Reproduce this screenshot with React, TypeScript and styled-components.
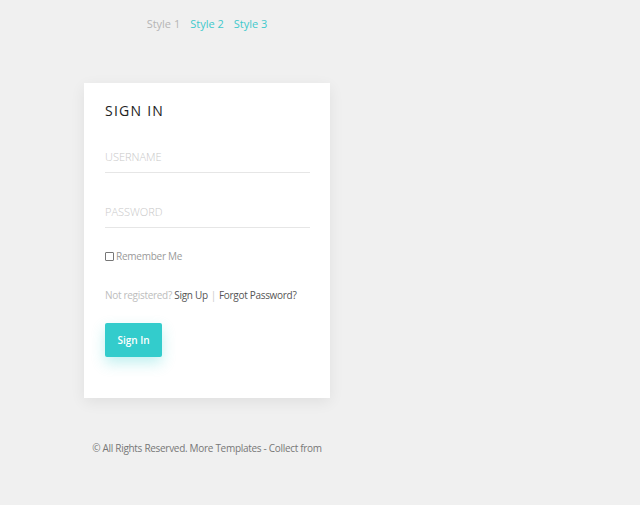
import React from "react";
import styled, { createGlobalStyle } from "styled-components";

const Global = createGlobalStyle`
  html, body { margin: 0; padding: 0; background: #f0f0f0; }
  body { font-family: "Open Sans", "Liberation Sans", sans-serif; }
`;

const Page = styled.div`
  width: 246px;
  margin-left: 84px;
  display: flex;
  flex-direction: column;
  align-items: stretch;
`;

const Nav = styled.nav`
  display: flex;
  justify-content: center;
  gap: 10px;
  padding-top: 15px;
  height: 18px;
  margin-bottom: 50px;
`;

const NavLink = styled.a<{ $active?: boolean }>`
  font-size: 11px;
  line-height: 18px;
  color: ${(p) => (p.$active ? "#b5b5b5" : "#3fc9cc")};
  text-decoration: none;
`;

const Card = styled.form`
  background: #fff;
  box-shadow: 0 4px 14px rgba(0, 0, 0, 0.07);
  padding: 18px 20px 41px 21px;
  display: flex;
  flex-direction: column;
`;

const Title = styled.h2`
  margin: 0;
  font-size: 14px;
  font-weight: 400;
  letter-spacing: 1.25px;
  color: #222;
  line-height: 20px;
`;

const FieldWrap = styled.div<{ $top: number }>`
  margin-top: ${(p) => p.$top}px;
  display: flex;
  flex-direction: column;
`;

const Field = styled.input`
  border: none;
  border-bottom: 1px solid #e6e6e6;
  outline: none;
  font-family: inherit;
  font-size: 11px;
  font-weight: 300;
  padding: 0 0 7px 0;
  line-height: 18px;
  height: 25px;
  box-sizing: border-box;
  color: #555;
  background: transparent;
  &::placeholder { color: #c8c8c8; }
`;

const Check = styled.label`
  margin-top: 20px;
  display: flex;
  align-items: center;
  gap: 2px;
  font-size: 10px;
  letter-spacing: -0.25px;
  color: #9a9a9a;
  line-height: 16px;
`;

const Box = styled.span`
  width: 7px;
  height: 7px;
  border: 1px solid #777;
  border-radius: 1px;
  display: inline-block;
`;

const Links = styled.p`
  margin: 23px 0 0 0;
  font-size: 10px;
  letter-spacing: -0.3px;
  line-height: 16px;
  color: #bdbdbd;
  white-space: nowrap;
`;

const Dark = styled.a`
  color: #555;
  text-decoration: none;
`;

const Sep = styled.span`
  color: #ccc;
  margin: 0 3px;
`;

const Button = styled.button`
  margin-top: 20px;
  align-self: flex-start;
  width: 57px;
  height: 34px;
  border: none;
  border-radius: 2px;
  background: #33cccc;
  color: #fff;
  font-family: inherit;
  font-size: 10px;
  font-weight: 600;
  box-shadow: 0 6px 14px rgba(51, 204, 204, 0.3);
`;

const Footer = styled.p`
  margin: 42px 0 0 0;
  text-align: center;
  font-size: 10px;
  letter-spacing: -0.3px;
  color: #777;
  line-height: 16px;
  white-space: nowrap;
`;

export default function App() {
  return (
    <>
      <Global />
      <Page>
        <Nav>
          <NavLink $active>Style 1</NavLink>
          <NavLink>Style 2</NavLink>
          <NavLink>Style 3</NavLink>
        </Nav>
        <Card>
          <Title>SIGN IN</Title>
          <FieldWrap $top={27}>
            <Field placeholder="USERNAME" />
          </FieldWrap>
          <FieldWrap $top={30}>
            <Field placeholder="PASSWORD" type="password" />
          </FieldWrap>
          <Check>
            <Box />
            Remember Me
          </Check>
          <Links>
            Not registered? <Dark>Sign Up</Dark>
            <Sep>|</Sep>
            <Dark>Forgot Password?</Dark>
          </Links>
          <Button type="button">Sign In</Button>
        </Card>
        <Footer>© All Rights Reserved. More Templates - Collect from</Footer>
      </Page>
    </>
  );
}
